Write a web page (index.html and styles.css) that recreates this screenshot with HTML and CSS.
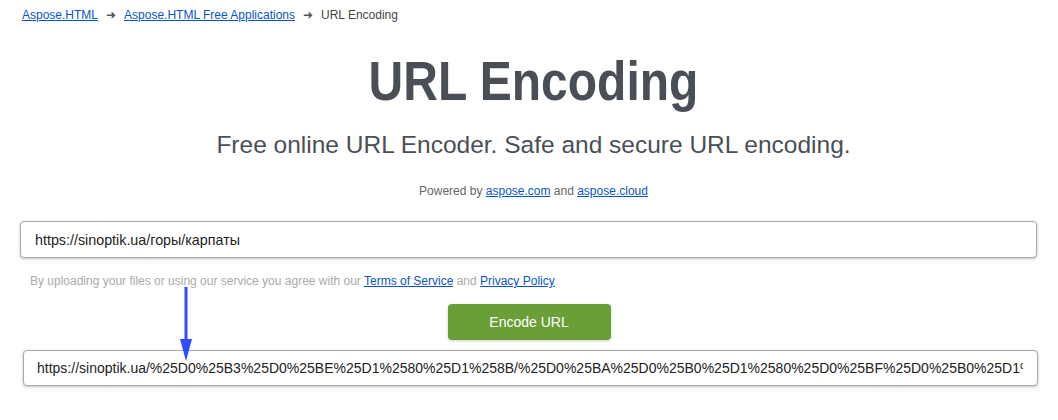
FILE: index.html
```html
<!DOCTYPE html>
<html lang="en">
<head>
<meta charset="utf-8">
<title>URL Encoding</title>
<link rel="stylesheet" href="styles.css">
</head>
<body>
<div class="page">
  <nav class="crumbs">
    <a href="#">Aspose.HTML</a>
    <span class="sep">➜</span>
    <a href="#">Aspose.HTML Free Applications</a>
    <span class="sep">➜</span>
    <span class="current">URL Encoding</span>
  </nav>
  <header class="hero">
    <h1 class="title">URL Encoding</h1>
    <p class="subtitle">Free online URL Encoder. Safe and secure URL encoding.</p>
    <p class="powered">Powered by <a href="#">aspose.com</a> and <a href="#">aspose.cloud</a></p>
  </header>
  <div class="field field-in">https://sinoptik.ua/горы/карпаты</div>
  <p class="terms">By uploading your files or using our service you agree with our <a href="#">Terms of Service</a> and <a href="#">Privacy Policy</a></p>
  <div class="actions"><button class="btn">Encode URL</button></div>
  <div class="field field-out"><span class="clip">https://sinoptik.ua/%25D0%25B3%25D0%25BE%25D1%2580%25D1%258B/%25D0%25BA%25D0%25B0%25D1%2580%25D0%25BF%25D0%25B0%25D1%2582%25D1%258B</span></div>
  <svg class="marker" width="16" height="80" viewBox="0 0 16 80">
    <rect x="6.5" y="0" width="3" height="56" fill="#2f4dff"/>
    <polygon points="2,52 14,52 8,74" fill="#2f4dff"/>
  </svg>
</div>
</body>
</html>
```
FILE: styles.css
```css
html, body { margin: 0; padding: 0; background: #fff; }
body { font-family: "Liberation Sans", Arial, sans-serif; color: #4a4f57; }
.page { position: relative; width: 1058px; height: 420px; overflow: hidden; }
.crumbs { padding: 8px 0 0 22px; font-size: 12px; line-height: 14px; color: #444; display: flex; gap: 6px; align-items: center; }
.crumbs a { color: #0a55c6; text-decoration: underline; }
.crumbs .sep { color: #555; font-size: 12px; padding: 0 2px; }
.crumbs .current { color: #444; }
.hero { padding-left: 9px; text-align: center; }
.title { margin: 32px 0 0; font-size: 48px; line-height: 56px; font-weight: bold; color: #4a4f57; transform: scaleY(1.15); }
.subtitle { margin: 21px 0 0; font-size: 24.5px; line-height: 28px; color: #4a4f57; }
.powered { margin: 25px 0 0; font-size: 12px; line-height: 14px; color: #666; }
.powered a { color: #0a55c6; }
.field { box-sizing: border-box; background: #fff; border: 1px solid #aaa; border-radius: 4px; box-shadow: 0 1px 3px rgba(0,0,0,0.25); color: #222; display: flex; align-items: center; overflow: hidden; white-space: nowrap; }
.field-in { margin: 23px 21px 0 20px; height: 37px; padding-left: 14px; font-size: 14.3px; }
.terms { margin: 16px 0 0 30px; font-size: 12px; line-height: 14px; color: #aaa; }
.terms a { color: #0a55c6; }
.actions { display: flex; justify-content: center; margin-top: 16px; }
.btn { width: 163px; height: 36px; background: #6a9f38; color: #fff; border: 0; border-radius: 4px; font-family: inherit; font-size: 14px; box-shadow: 0 1px 3px rgba(0,0,0,0.2); }
.field-out { margin: 10px 20px 0 23px; height: 36px; padding: 0 14px 0 13px; font-size: 14px; }
.clip { display: block; overflow: hidden; white-space: nowrap; width: 100%; }
.marker { position: absolute; left: 178px; top: 287px; }
```
